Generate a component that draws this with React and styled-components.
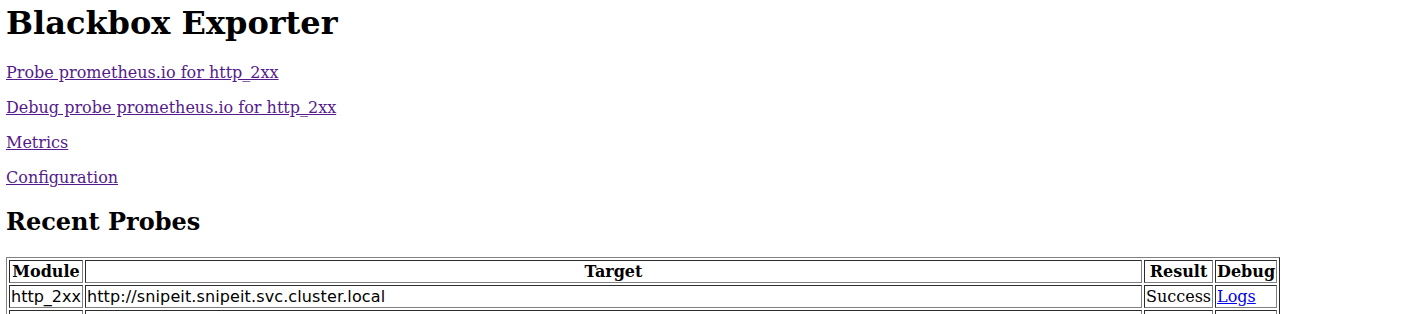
import React from "react";
import styled, { createGlobalStyle } from "styled-components";

const Global = createGlobalStyle`
  html, body { margin: 0; padding: 0; background: #fff; }
  body {
    padding: 0 0 0 6px;
    font-family: "DejaVu Serif", serif;
    font-size: 16px;
    color: #000;
  }
`;

const Title = styled.h1`
  font-size: 32px;
  font-weight: bold;
  margin: 4px 0 21.44px;
`;

const SubTitle = styled.h2`
  font-size: 24px;
  font-weight: bold;
  margin: 19.92px 0 21px;
`;

const Para = styled.p`
  margin: 16px 0;
`;

const Link = styled.a`
  color: ${(p) => (p.$visited ? "#551a8b" : "#0000ee")};
  text-decoration: underline;
`;

const Table = styled.table`
  border: 1px outset #808080;
  border-spacing: 2px;
  border-collapse: separate;
`;

const Th = styled.th`
  border: 1px inset #808080;
  padding: 1px;
  font-weight: bold;
  text-align: center;
  ${(p) => p.$width && `width: ${p.$width}px;`}
`;

const Td = styled.td`
  border: 1px inset #808080;
  padding: 1px;
  font-family: ${(p) => (p.$sans ? '"DejaVu Sans", sans-serif' : '"DejaVu Serif", serif')};
  letter-spacing: ${(p) => (p.$wide ? "0.12px" : "normal")};
`;

const rows = [
  { module: "http_2xx", target: "http://snipeit.snipeit.svc.cluster.local", result: "Success" },
  { module: "http_2xx", target: "http://snipeit.snipeit.svc.cluster.local", result: "Success" },
  { module: "http_2xx", target: "http://snipeit.snipeit.svc.cluster.local", result: "Success" },
];

export default function App() {
  return (
    <>
      <Global />
      <Title>Blackbox Exporter</Title>
      <Para><Link $visited href="#">Probe prometheus.io for http_2xx</Link></Para>
      <Para><Link $visited href="#">Debug probe prometheus.io for http_2xx</Link></Para>
      <Para><Link $visited href="#">Metrics</Link></Para>
      <Para><Link $visited href="#">Configuration</Link></Para>
      <SubTitle>Recent Probes</SubTitle>
      <Table>
        <thead>
          <tr>
            <Th>Module</Th>
            <Th $width={1053}>Target</Th>
            <Th>Result</Th>
            <Th>Debug</Th>
          </tr>
        </thead>
        <tbody>
          {rows.map((r, i) => (
            <tr key={i}>
              <Td $sans>{r.module}</Td>
              <Td $sans $wide>{r.target}</Td>
              <Td>{r.result}</Td>
              <Td><Link href="#">Logs</Link></Td>
            </tr>
          ))}
        </tbody>
      </Table>
    </>
  );
}
